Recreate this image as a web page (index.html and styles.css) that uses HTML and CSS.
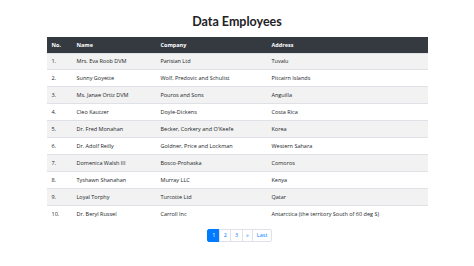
FILE: index.html
```html
<!doctype html>
<html>

<head>
    <meta charset="utf-8">
    <title>Data Employees</title>
    <link rel="stylesheet" href="styles.css">
</head>

<body>
<div class="container">
    <h1 class="title">Data Employees</h1>
    <table class="table">
        <thead>
        <tr>
            <th class="col-no">No.</th>
            <th class="col-name">Name</th>
            <th class="col-company">Company</th>
            <th>Address</th>
        </tr>
        </thead>
        <tbody>
        <tr><td>1.</td><td>Mrs. Eva Roob DVM</td><td>Parisian Ltd</td><td>Tuvalu</td></tr>
        <tr><td>2.</td><td>Sunny Goyette</td><td>Wolf, Predovic and Schulist</td><td>Pitcairn Islands</td></tr>
        <tr><td>3.</td><td>Ms. Janae Ortiz DVM</td><td>Pouros and Sons</td><td>Anguilla</td></tr>
        <tr><td>4.</td><td>Cleo Kautzer</td><td>Doyle-Dickens</td><td>Costa Rica</td></tr>
        <tr><td>5.</td><td>Dr. Fred Monahan</td><td>Becker, Corkery and O'Keefe</td><td>Korea</td></tr>
        <tr><td>6.</td><td>Dr. Adolf Reilly</td><td>Goldner, Price and Lockman</td><td>Western Sahara</td></tr>
        <tr><td>7.</td><td>Domenica Walsh III</td><td>Bosco-Prohaska</td><td>Comoros</td></tr>
        <tr><td>8.</td><td>Tyshawn Shanahan</td><td>Murray LLC</td><td>Kenya</td></tr>
        <tr><td>9.</td><td>Loyal Torphy</td><td>Turcotte Ltd</td><td>Qatar</td></tr>
        <tr><td>10.</td><td>Dr. Beryl Russel</td><td>Carroll Inc</td><td>Antarctica (the territory South of 60 deg S)</td></tr>
        </tbody>
    </table>
    <ul class="pagination">
        <li class="active"><a href="#">1</a></li>
        <li><a href="#">2</a></li>
        <li><a href="#">3</a></li>
        <li><a href="#">&raquo;</a></li>
        <li><a href="#">Last</a></li>
    </ul>
</div>
</body>

</html>
```

FILE: styles.css
```css
* {
    padding: 0;
    margin: 0;
    list-style: none;
    box-sizing: border-box;
}

body {
    font-family: "Open Sans", "Noto Sans", sans-serif;
    font-size: 5.5px;
    color: #212529;
    background: #fff;
}

.container {
    width: 381px;
    margin: 0 auto;
    padding-top: 12px;
}

.title {
    font-family: Lato, "Open Sans", sans-serif;
    font-size: 12.5px;
    font-weight: 700;
    line-height: 20px;
    text-align: center;
    margin-bottom: 5px;
    color: #1e2125;
}

.table {
    width: 100%;
    border-collapse: collapse;
}

.table th,
.table td {
    text-align: left;
    padding: 0 5px;
    vertical-align: middle;
}

.table th {
    height: 16px;
    background: #343a40;
    color: #fff;
    font-weight: bold;
}

.table td {
    height: 16.9px;
    border-top: 1px solid #dee2e6;
}

.table tbody tr:nth-child(odd) {
    background: #f2f2f2;
}

.col-no {
    width: 25px;
}

.col-name {
    width: 84px;
}

.col-company {
    width: 111px;
}

.pagination {
    display: flex;
    justify-content: center;
    margin-top: 7px;
    padding-left: 6px;
}

.pagination a {
    display: block;
    height: 13px;
    line-height: 11px;
    padding: 0 3.5px;
    border: 1px solid #dee2e6;
    margin-left: -1px;
    color: #007bff;
    text-decoration: none;
}

.pagination li:first-child a {
    border-radius: 2px 0 0 2px;
}

.pagination li:last-child a {
    border-radius: 0 2px 2px 0;
}

.pagination .active a {
    padding: 0 4px;
    background: #007bff;
    border-color: #007bff;
    color: #fff;
}
```
